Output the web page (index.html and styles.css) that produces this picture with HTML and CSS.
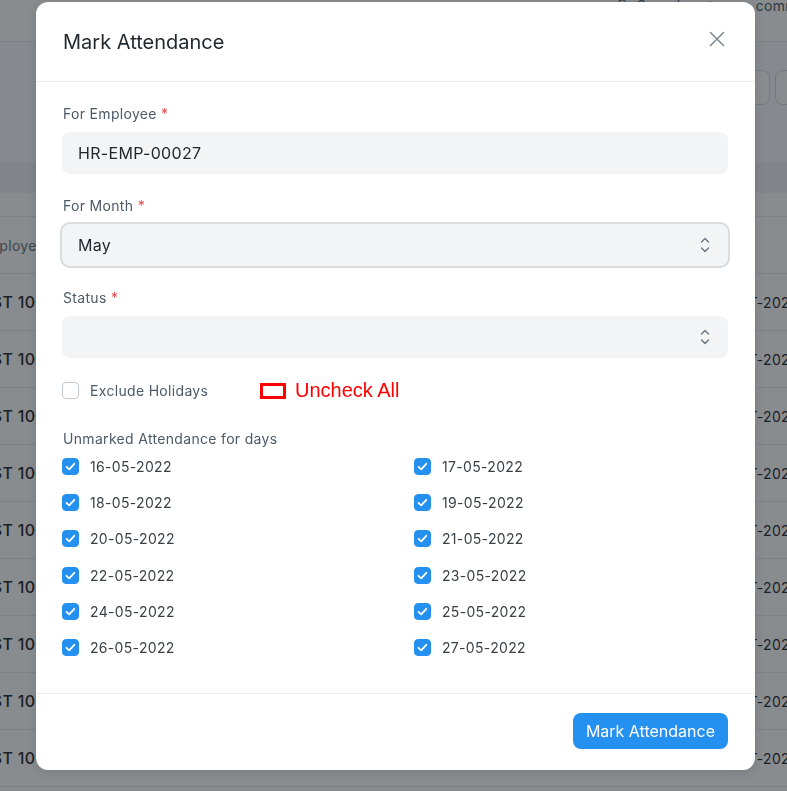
FILE: index.html
```html
<!DOCTYPE html>
<html>
<head>
<meta charset="utf-8">
<link rel="stylesheet" href="styles.css">
</head>
<body>
<div class="page">
  <div class="navbar">
    <div class="search">
      <svg class="search-icon" width="12" height="12" viewBox="0 0 12 12"><circle cx="5" cy="5" r="4" fill="none" stroke="#4c5a67" stroke-width="1.2"/><path d="M8 8l3 3" stroke="#4c5a67" stroke-width="1.2"/></svg>
      <span>Search or type a command (Ctrl + G)</span>
    </div>
  </div>
  <div class="toolbar">
    <span class="tb-btn"></span>
    <span class="tb-btn"></span>
  </div>
  <div class="list">
    <div class="filter-band"></div>
    <div class="spacer-band"></div>
    <div class="row head"><span class="c1">Employee Name</span></div>
    <div class="row"><span class="c1 strong">TEST 1001</span><span class="c2">HR-ATT-2022-00012</span></div>
    <div class="row"><span class="c1 strong">TEST 1001</span><span class="c2">HR-ATT-2022-00011</span></div>
    <div class="row"><span class="c1 strong">TEST 1001</span><span class="c2">HR-ATT-2022-00010</span></div>
    <div class="row"><span class="c1 strong">TEST 1001</span><span class="c2">HR-ATT-2022-00009</span></div>
    <div class="row"><span class="c1 strong">TEST 1001</span><span class="c2">HR-ATT-2022-00008</span></div>
    <div class="row"><span class="c1 strong">TEST 1001</span><span class="c2">HR-ATT-2022-00007</span></div>
    <div class="row"><span class="c1 strong">TEST 1001</span><span class="c2">HR-ATT-2022-00006</span></div>
    <div class="row"><span class="c1 strong">TEST 1001</span><span class="c2">HR-ATT-2022-00005</span></div>
    <div class="row"><span class="c1 strong">TEST 1001</span><span class="c2">HR-ATT-2022-00004</span></div>
  </div>
</div>
<div class="overlay"></div>
<div class="modal">
  <div class="modal-header">
    <h4 class="modal-title">Mark Attendance</h4>
    <svg class="close" width="16" height="16" viewBox="0 0 16 16"><path d="M1.5 1.5L14.5 14.5M14.5 1.5L1.5 14.5" stroke="#7c8791" stroke-width="1.5" stroke-linecap="round"/></svg>
  </div>
  <div class="modal-body">
    <div class="field">
      <div class="label">For Employee <span class="req">*</span></div>
      <div class="input">HR-EMP-00027</div>
    </div>
    <div class="field">
      <div class="label">For Month <span class="req">*</span></div>
      <div class="input select focus">
        <span>May</span>
        <svg class="arrows" width="10" height="18" viewBox="0 0 10 18"><path d="M1.5 6L5 2.5L8.5 6M1.5 12L5 15.5L8.5 12" fill="none" stroke="#6b7580" stroke-width="1.4" stroke-linecap="round" stroke-linejoin="round"/></svg>
      </div>
    </div>
    <div class="field">
      <div class="label">Status <span class="req">*</span></div>
      <div class="input select">
        <span></span>
        <svg class="arrows" width="10" height="18" viewBox="0 0 10 18"><path d="M1.5 6L5 2.5L8.5 6M1.5 12L5 15.5L8.5 12" fill="none" stroke="#6b7580" stroke-width="1.4" stroke-linecap="round" stroke-linejoin="round"/></svg>
      </div>
    </div>
    <div class="check-line">
      <label class="check exclude"><span class="box"></span><span>Exclude Holidays</span></label>
      <span class="uncheck-box"></span>
      <span class="uncheck-text">Uncheck All</span>
    </div>
    <div class="label section">Unmarked Attendance for days</div>
    <div class="days">
      <label class="check"><span class="box on"><svg width="17" height="17" viewBox="0 0 17 17"><path d="M4.5 8.8L7.2 11.3L12.3 5.8" fill="none" stroke="#fff" stroke-width="1.8" stroke-linecap="round" stroke-linejoin="round"/></svg></span><span>16-05-2022</span></label>
      <label class="check"><span class="box on"><svg width="17" height="17" viewBox="0 0 17 17"><path d="M4.5 8.8L7.2 11.3L12.3 5.8" fill="none" stroke="#fff" stroke-width="1.8" stroke-linecap="round" stroke-linejoin="round"/></svg></span><span>17-05-2022</span></label>
      <label class="check"><span class="box on"><svg width="17" height="17" viewBox="0 0 17 17"><path d="M4.5 8.8L7.2 11.3L12.3 5.8" fill="none" stroke="#fff" stroke-width="1.8" stroke-linecap="round" stroke-linejoin="round"/></svg></span><span>18-05-2022</span></label>
      <label class="check"><span class="box on"><svg width="17" height="17" viewBox="0 0 17 17"><path d="M4.5 8.8L7.2 11.3L12.3 5.8" fill="none" stroke="#fff" stroke-width="1.8" stroke-linecap="round" stroke-linejoin="round"/></svg></span><span>19-05-2022</span></label>
      <label class="check"><span class="box on"><svg width="17" height="17" viewBox="0 0 17 17"><path d="M4.5 8.8L7.2 11.3L12.3 5.8" fill="none" stroke="#fff" stroke-width="1.8" stroke-linecap="round" stroke-linejoin="round"/></svg></span><span>20-05-2022</span></label>
      <label class="check"><span class="box on"><svg width="17" height="17" viewBox="0 0 17 17"><path d="M4.5 8.8L7.2 11.3L12.3 5.8" fill="none" stroke="#fff" stroke-width="1.8" stroke-linecap="round" stroke-linejoin="round"/></svg></span><span>21-05-2022</span></label>
      <label class="check"><span class="box on"><svg width="17" height="17" viewBox="0 0 17 17"><path d="M4.5 8.8L7.2 11.3L12.3 5.8" fill="none" stroke="#fff" stroke-width="1.8" stroke-linecap="round" stroke-linejoin="round"/></svg></span><span>22-05-2022</span></label>
      <label class="check"><span class="box on"><svg width="17" height="17" viewBox="0 0 17 17"><path d="M4.5 8.8L7.2 11.3L12.3 5.8" fill="none" stroke="#fff" stroke-width="1.8" stroke-linecap="round" stroke-linejoin="round"/></svg></span><span>23-05-2022</span></label>
      <label class="check"><span class="box on"><svg width="17" height="17" viewBox="0 0 17 17"><path d="M4.5 8.8L7.2 11.3L12.3 5.8" fill="none" stroke="#fff" stroke-width="1.8" stroke-linecap="round" stroke-linejoin="round"/></svg></span><span>24-05-2022</span></label>
      <label class="check"><span class="box on"><svg width="17" height="17" viewBox="0 0 17 17"><path d="M4.5 8.8L7.2 11.3L12.3 5.8" fill="none" stroke="#fff" stroke-width="1.8" stroke-linecap="round" stroke-linejoin="round"/></svg></span><span>25-05-2022</span></label>
      <label class="check"><span class="box on"><svg width="17" height="17" viewBox="0 0 17 17"><path d="M4.5 8.8L7.2 11.3L12.3 5.8" fill="none" stroke="#fff" stroke-width="1.8" stroke-linecap="round" stroke-linejoin="round"/></svg></span><span>26-05-2022</span></label>
      <label class="check"><span class="box on"><svg width="17" height="17" viewBox="0 0 17 17"><path d="M4.5 8.8L7.2 11.3L12.3 5.8" fill="none" stroke="#fff" stroke-width="1.8" stroke-linecap="round" stroke-linejoin="round"/></svg></span><span>27-05-2022</span></label>
    </div>
  </div>
  <div class="modal-footer">
    <button class="btn-primary">Mark Attendance</button>
  </div>
</div>
</body>
</html>
```

FILE: styles.css
```css
* { box-sizing: border-box; }
html, body { margin: 0; padding: 0; }
body {
  width: 787px;
  height: 791px;
  overflow: hidden;
  font-family: Inter, "Noto Sans", sans-serif;
  background: #f8f9fa;
  letter-spacing: 0.02em;
}

/* background page */
.page { width: 787px; height: 791px; overflow: hidden; }
.navbar {
  height: 42px;
  display: flex;
  align-items: flex-start;
  background: #ffffff;
  border-bottom: 1px solid #e2e6e9;
  padding-left: 617px;
}
.search {
  display: flex;
  align-items: center;
  gap: 8px;
  margin-top: -5px;
  height: 20px;
  font-size: 14px;
  color: #4c5a67;
  white-space: nowrap;
}
.search-icon { flex: none; }
.toolbar {
  display: flex;
  gap: 5px;
  padding: 28px 0 0 700px;
  height: 63px;
}
.tb-btn {
  width: 70px;
  height: 35px;
  flex: none;
  background: #ffffff;
  border: 1px solid #d1d8dd;
  border-radius: 8px;
}
.list { margin-top: 57px; margin-left: -22px; width: 900px; background: #ffffff; }
.filter-band { height: 31px; background: #eef0f2; }
.spacer-band { height: 24px; border-bottom: 1px solid #e6e9ec; }
.row {
  height: 57px;
  display: flex;
  align-items: center;
  border-bottom: 1px solid #e6e9ec;
  font-size: 14px;
  color: #1f272e;
  white-space: nowrap;
}
.row.head { color: #687178; }
.row .c1 { width: 774px; flex: none; }
.row .c1.strong { font-size: 16px; font-weight: 500; text-indent: -7px; }
.row .c2 { margin-left: -48px; }

.overlay {
  position: fixed;
  inset: 0;
  background: rgba(20, 26, 32, 0.5);
}

/* modal */
.modal {
  position: fixed;
  left: 36px;
  top: 2px;
  width: 719px;
  height: 768px;
  background: #ffffff;
  border-radius: 12px;
  box-shadow: 0 2px 10px rgba(0, 0, 0, 0.12);
  display: flex;
  flex-direction: column;
}
.modal-header {
  height: 80px;
  flex: none;
  border-bottom: 1px solid #ededed;
  display: flex;
  align-items: center;
  justify-content: space-between;
  padding: 0 30px 0 27px;
}
.modal-title {
  margin: 0;
  font-size: 20px;
  font-weight: 400;
  color: #1f272e;
  letter-spacing: 0;
}
.close { margin-top: -5px; }

.modal-body { flex: 1; padding: 22px 27px 0 26px; }
.field { margin-bottom: 22px; }
.label {
  font-size: 14px;
  line-height: 20px;
  color: #4c5a67;
  margin-bottom: 8px;
  padding-left: 1px;
}
.req { color: #e24c4c; }
.input {
  height: 42px;
  background: #f3f4f6;
  border-radius: 8px;
  padding: 0 15px 0 16px;
  display: flex;
  align-items: center;
  justify-content: space-between;
  font-size: 16px;
  color: #1f272e;
}
.input.focus { box-shadow: 0 0 0 2px #d9dcdf; }
.arrows { margin-right: 3px; }

.check-line {
  display: flex;
  align-items: center;
  height: 20px;
}
.check {
  display: flex;
  align-items: center;
  gap: 11px;
  font-size: 14px;
  color: #383f45;
  height: 20px;
}
.exclude { width: 198px; flex: none; color: #4c5a67; }
.box {
  width: 17px;
  height: 17px;
  flex: none;
  border-radius: 4px;
  border: 1px solid #c2c9cf;
  background: #ffffff;
  display: flex;
}
.box.on { background: #2490ef; border-color: #2490ef; }
.box.on svg { margin: -1px; }
.uncheck-box {
  width: 26px;
  height: 16px;
  flex: none;
  border: 3px solid #ff0000;
  background: #ffffff;
  margin-top: 1px;
}
.uncheck-text {
  margin-left: 9px;
  font-family: "Liberation Sans", Arial, sans-serif;
  font-size: 20px;
  color: #ff0000;
  letter-spacing: 0;
}
.label.section { margin-top: 29px; margin-bottom: 7px; }
.days {
  display: grid;
  grid-template-columns: 352px 1fr;
  row-gap: 16.4px;
}

.modal-footer {
  height: 77px;
  flex: none;
  border-top: 1px solid #ededed;
  display: flex;
  align-items: center;
  justify-content: flex-end;
  padding: 0 27px 2px 0;
}
.btn-primary {
  height: 36px;
  padding: 0 13px;
  border: none;
  border-radius: 8px;
  background: #2490ef;
  color: #ffffff;
  font-family: Inter, "Noto Sans", sans-serif;
  font-size: 16px;
  letter-spacing: 0;
}
```
